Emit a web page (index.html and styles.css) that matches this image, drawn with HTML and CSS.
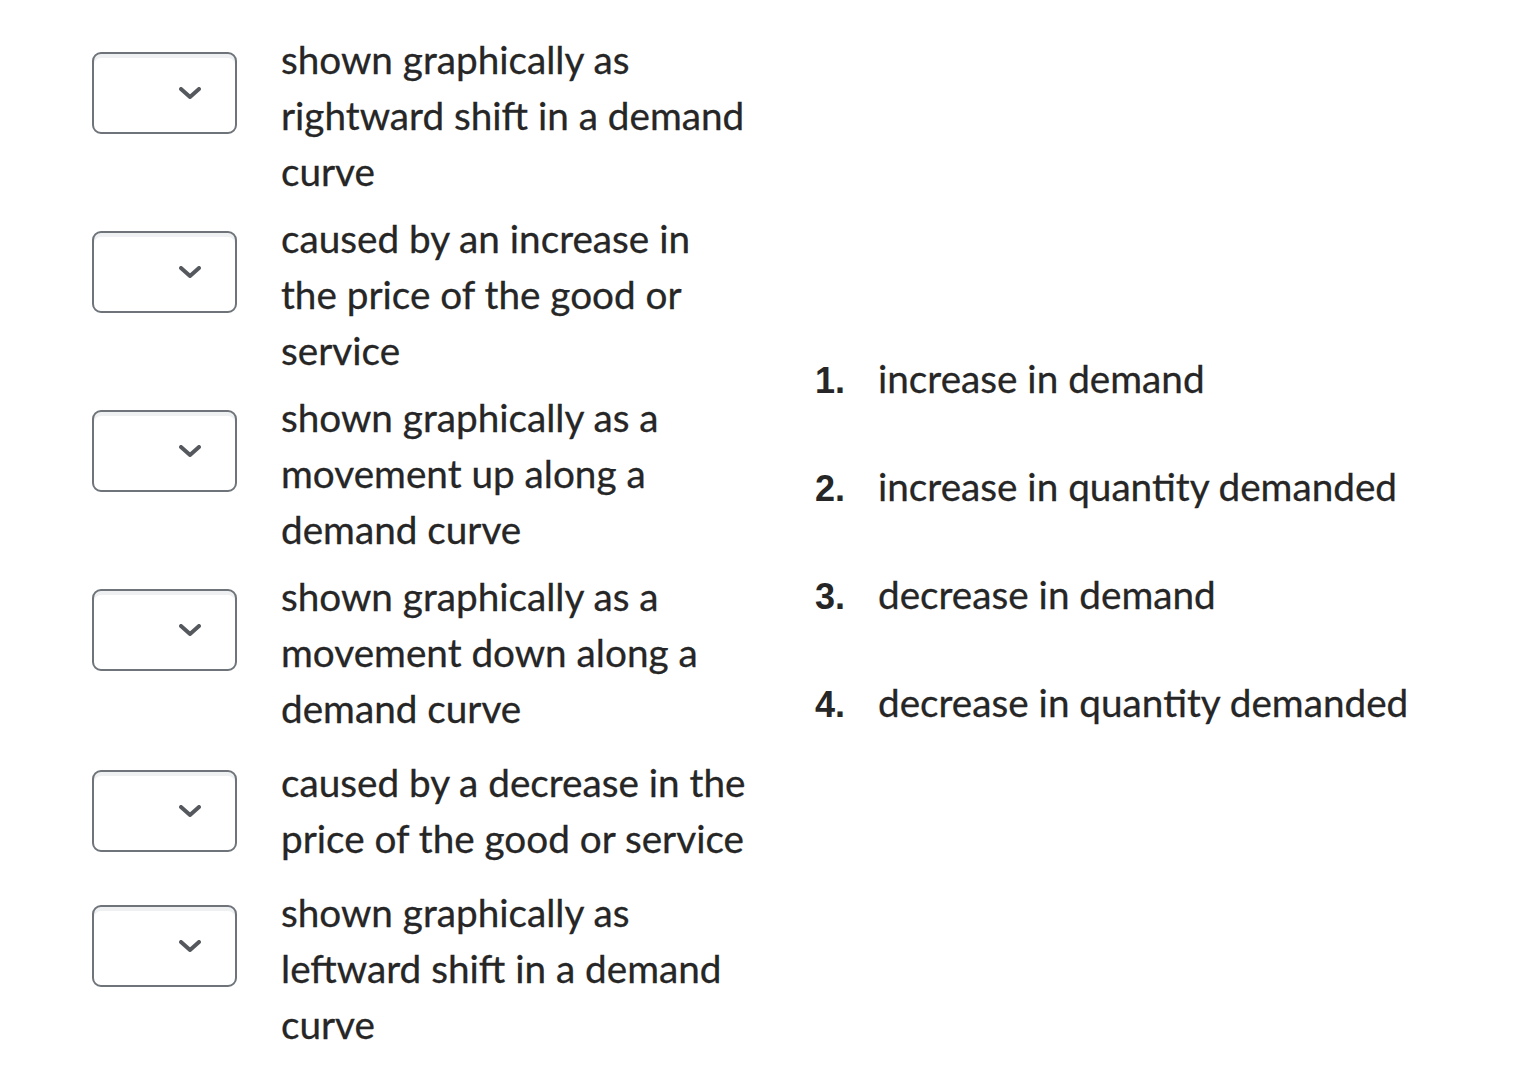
FILE: index.html
```html
<!DOCTYPE html>
<html lang="en">
<head>
<meta charset="utf-8">
<title>Matching question</title>
<link rel="stylesheet" href="styles.css">
</head>
<body>
<div class="question">
  <div class="prompts">
    <div class="row">
      <div class="select"><svg class="chev" viewBox="0 0 22 12"><path d="M2 2 L11 10 L20 2"/></svg></div>
      <div class="prompt">shown graphically as rightward shift in a demand curve</div>
    </div>
    <div class="row">
      <div class="select"><svg class="chev" viewBox="0 0 22 12"><path d="M2 2 L11 10 L20 2"/></svg></div>
      <div class="prompt">caused by an increase in the price of the good or service</div>
    </div>
    <div class="row">
      <div class="select"><svg class="chev" viewBox="0 0 22 12"><path d="M2 2 L11 10 L20 2"/></svg></div>
      <div class="prompt">shown graphically as a movement up along a demand curve</div>
    </div>
    <div class="row">
      <div class="select"><svg class="chev" viewBox="0 0 22 12"><path d="M2 2 L11 10 L20 2"/></svg></div>
      <div class="prompt">shown graphically as a movement down along a demand curve</div>
    </div>
    <div class="row row-short">
      <div class="select"><svg class="chev" viewBox="0 0 22 12"><path d="M2 2 L11 10 L20 2"/></svg></div>
      <div class="prompt">caused by a decrease in the price of the good or service</div>
    </div>
    <div class="row">
      <div class="select"><svg class="chev" viewBox="0 0 22 12"><path d="M2 2 L11 10 L20 2"/></svg></div>
      <div class="prompt">shown graphically as leftward shift in a demand curve</div>
    </div>
  </div>
  <ol class="answers">
    <li><span class="num">1.</span><span class="ans">increase in demand</span></li>
    <li><span class="num">2.</span><span class="ans">increase in quantity demanded</span></li>
    <li><span class="num">3.</span><span class="ans">decrease in demand</span></li>
    <li><span class="num">4.</span><span class="ans">decrease in quantity demanded</span></li>
  </ol>
</div>
</body>
</html>
```

FILE: styles.css
```css
html, body {
  margin: 0;
  padding: 0;
  background: #ffffff;
}

body {
  font-family: Lato, "Open Sans", sans-serif;
  color: #262626;
  font-size: 38.7px;
  line-height: 56px;
  -webkit-text-stroke: 0.3px #262626;
}

.question {
  display: flex;
  align-items: center;
  padding: 31px 0 0 92px;
}

.prompts {
  display: flex;
  flex-direction: column;
  gap: 11px;
}

.row {
  display: flex;
  align-items: flex-start;
}

.row-short {
  padding: 7px 0;
}

.select {
  box-sizing: border-box;
  width: 145px;
  height: 82px;
  margin-top: 21px;
  border: 2px solid #6e747a;
  border-radius: 9px;
  background: #ffffff;
  box-shadow: inset 0 4px 0 #eef0f2;
  display: flex;
  align-items: center;
  justify-content: flex-end;
  padding-right: 34px;
  flex: none;
}

.row-short .select {
  margin-top: 16px;
}

.chev {
  width: 22px;
  height: 12px;
  fill: none;
  stroke: #55595e;
  stroke-width: 4;
  stroke-linecap: round;
  stroke-linejoin: round;
}

.prompt {
  width: 470px;
  margin-left: 44px;
}

.answers {
  list-style: none;
  margin: 0 0 0 64px;
  padding: 0;
  display: flex;
  flex-direction: column;
  gap: 49px;
}

.answers li {
  display: flex;
  align-items: baseline;
}

.num {
  font-family: "Liberation Sans", Arial, sans-serif;
  font-weight: 700;
  font-size: 36px;
  width: 63px;
  -webkit-text-stroke: 0;
}
```
